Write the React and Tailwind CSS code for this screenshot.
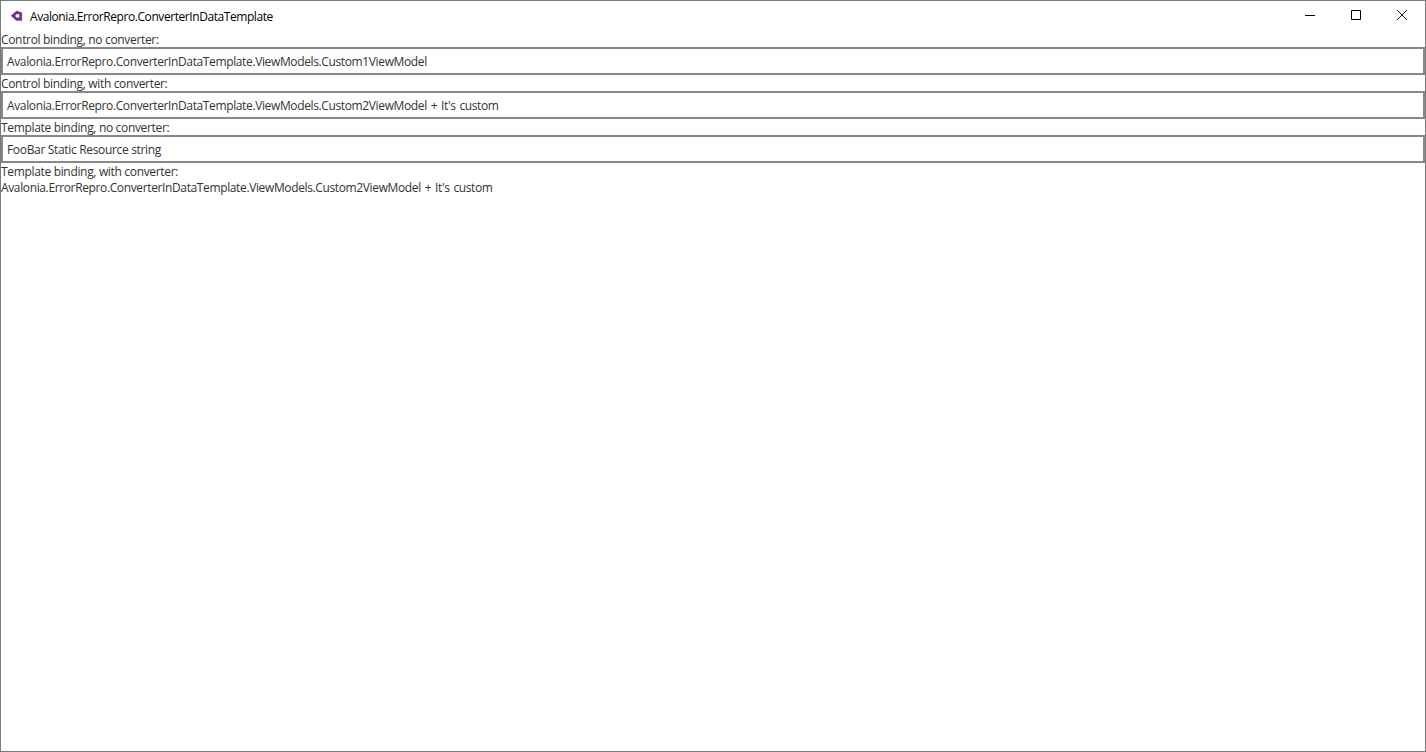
import React from "react";

const font = "font-['Open_Sans',sans-serif]";
// the long type names run a bit tighter than the short captions
const longText = "tracking-[-0.37px] [word-spacing:1.1px]";

function AppIcon() {
  return (
    <svg width="13" height="12" viewBox="0 0 13 12" className="shrink-0">
      <path fillRule="evenodd" fill="#6b2d8b" stroke="#6b2d8b" strokeWidth="0.4" strokeLinejoin="round" d="M6.5 1 11.8 2.7v7.9H6.5L1 5.8zM6.5 3.9 5.3 5.2v1.2L6.5 7.8h3V3.9z" />
    </svg>
  );
}

function Label({ children, className = "tracking-[-0.33px]" }) {
  return <div className={`h-4 pt-px text-[12px] leading-[16px] text-[#333] whitespace-nowrap ${className}`}>{children}</div>;
}

function Box({ children, className = "tracking-[-0.33px]" }) {
  return (
    <div className={`h-7 border-2 border-[#888888] pl-1 pt-px text-[12px] leading-[24px] text-[#333] whitespace-nowrap ${className}`}>
      {children}
    </div>
  );
}

export default function App() {
  return (
    <div className={`w-[1426px] h-[752px] bg-white border border-[#7a7a7a] overflow-hidden flex flex-col ${font}`}>
      {/* Title bar */}
      <div className="h-[30px] shrink-0 flex items-center">
        <div className="pl-[9px] pr-[7px] shrink-0 flex">
          <AppIcon />
        </div>
        <span className="flex-1 pt-px text-[12px] text-black whitespace-nowrap tracking-[-0.43px]">Avalonia.ErrorRepro.ConverterInDataTemplate</span>
        <div className="flex h-full">
          <button className="w-[46px] h-full flex justify-center pt-[9px]">
            <svg width="10" height="10" viewBox="0 0 10 10"><path d="M0 5.5h10" stroke="#000" fill="none" /></svg>
          </button>
          <button className="w-[46px] h-full flex justify-center pt-[9px]">
            <svg width="10" height="10" viewBox="0 0 10 10"><path d="M.5.5h9v9h-9z" stroke="#000" fill="none" /></svg>
          </button>
          <button className="w-[46px] h-full flex justify-center pt-[9px]">
            <svg width="10" height="10" viewBox="0 0 10 10"><path d="M0 0l10 10M10 0L0 10" stroke="#000" strokeWidth="0.9" fill="none" /></svg>
          </button>
        </div>
      </div>

      {/* Content */}
      <div className="flex flex-col">
        <Label>Control binding, no converter:</Label>
        <Box className={longText}>Avalonia.ErrorRepro.ConverterInDataTemplate.ViewModels.Custom1ViewModel</Box>
        <Label>Control binding, with converter:</Label>
        <Box className={longText}>Avalonia.ErrorRepro.ConverterInDataTemplate.ViewModels.Custom2ViewModel + It's custom</Box>
        <Label>Template binding, no converter:</Label>
        <Box>FooBar Static Resource string</Box>
        <Label>Template binding, with converter:</Label>
        <Label className={longText}>Avalonia.ErrorRepro.ConverterInDataTemplate.ViewModels.Custom2ViewModel + It's custom</Label>
      </div>
    </div>
  );
}
